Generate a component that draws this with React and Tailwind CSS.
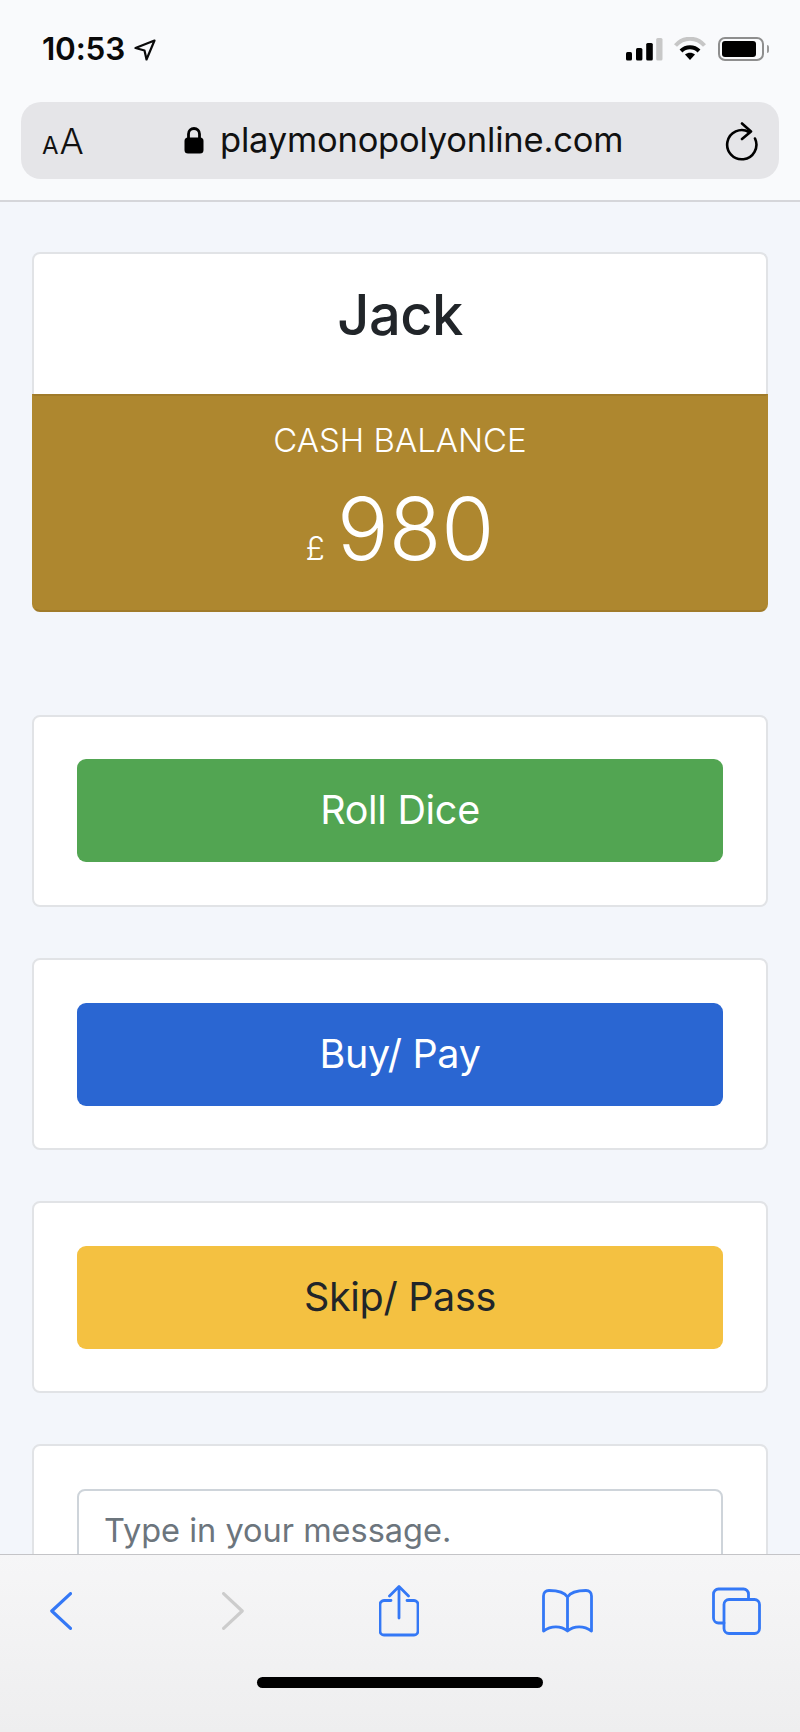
const font = { fontFamily: "Inter, 'Noto Sans', sans-serif" };

function Chevron({ dir, color }) {
  return (
    <svg width="22" height="38" viewBox="0 0 22 38" fill="none" stroke={color} strokeWidth="3.2" strokeLinecap="round" strokeLinejoin="round">
      {dir === "left" ? <path d="M20.5 1.6 L1.8 19 L20.5 36.4" /> : <path d="M1.6 1.6 L20.2 19 L1.6 36.4" />}
    </svg>
  );
}

function CardAction({ color, text, top, children }) {
  return (
    <div className={`h-[192px] rounded-lg border-2 border-[#e1e3e6] bg-white pl-[43px] pr-[43px] ${top}`}>
      <div className={`flex h-[103px] items-center justify-center rounded-[9px] text-[39.5px] leading-none tracking-[-0.3px] ${color} ${text}`}>
        {children}
      </div>
    </div>
  );
}

export default function App() {
  return (
    <div className="flex h-[1732px] w-[800px] flex-col overflow-hidden bg-[#f3f6fb]" style={font}>
      <header className="h-[202px] shrink-0 border-b-2 border-[#d5d6da] bg-[#f9fafc] px-[21px]">
        <div className="flex h-[102px] items-start">
          <div className="ml-[21px] mt-[29px] flex items-center text-[31.5px] font-semibold leading-[40px] tracking-[-0.2px] text-[#0a0a0a]">
            <span>10:53</span>
            <svg className="ml-[9px] mt-[1px]" width="22" height="22" viewBox="0 0 22 22" fill="none" stroke="#0a0a0a" strokeWidth="2.2" strokeLinejoin="round">
              <path d="M20.5 1.5 L1.5 9 L10.5 11.5 L12.5 20.5 Z" />
            </svg>
          </div>
          <div className="ml-auto mr-[10px] mt-[37px] flex items-start">
            <svg width="37" height="24" viewBox="0 0 37 24">
              <rect x="0" y="15" width="6" height="8.5" rx="1.5" fill="#000" />
              <rect x="10" y="11" width="6.4" height="12.5" rx="1.5" fill="#000" />
              <rect x="20.2" y="6" width="6.6" height="17.5" rx="1.5" fill="#000" />
              <rect x="30.2" y="1" width="6.3" height="22.5" rx="1.5" fill="#c8c8c8" />
            </svg>
            <svg className="ml-[11px]" width="32" height="24" viewBox="0 0 32 24" fill="none">
              <path d="M1.5 8.5 C 9.5 -0.5, 22.5 -0.5, 30.5 8.5" stroke="#c6c6c6" strokeWidth="4" />
              <path d="M7 14 C 12 9, 20 9, 25 14" stroke="#000" strokeWidth="4" />
              <path d="M11 17.5 C 14 15, 18 15, 21 17.5 L16 23 Z" fill="#000" />
            </svg>
            <div className="ml-[12px] flex h-[24px] w-[46px] items-center rounded-[7px] border-2 border-[#8e8e8e] p-[2px]">
              <div className="h-[16px] w-[34px] rounded-[3px] bg-black" />
            </div>
            <div className="ml-[3px] mt-[8px] h-[8px] w-[2px] rounded-r-sm bg-[#9a9a9a]" />
          </div>
        </div>
        <div className="flex h-[77px] items-center rounded-[20px] bg-[#e5e5e8] text-[#111]">
          <div className="ml-[21px] flex w-[142px] items-baseline gap-[1px] font-light leading-none">
            <span className="text-[24px] font-normal">A</span>
            <span className="text-[36px]">A</span>
          </div>
          <svg width="20" height="28" viewBox="0 0 20 28" className="mt-[-1px]">
            <path d="M4.5 13 V8 a5.5 5.5 0 0 1 11 0 V13" fill="none" stroke="#000" strokeWidth="2.8" />
            <rect x="0.5" y="11.5" width="19" height="16" rx="3.5" fill="#000" />
          </svg>
          <span className="ml-[16px] text-[34.5px] leading-none tracking-[-0.2px]">playmonopolyonline.com</span>
          <svg className="ml-auto mr-[20px] mt-[2px]" width="34" height="40" viewBox="0 0 34 40" fill="none" stroke="#000" strokeWidth="2.6" strokeLinecap="round" strokeLinejoin="round">
            <path d="M24 10 A14.6 14.6 0 1 0 30 16.5" />
            <path d="M17 1.5 L26 9.5 L17 17" />
          </svg>
        </div>
      </header>

      <main className="min-h-0 flex-1 overflow-hidden px-[32px] pt-[50px]">
        <section className="flex h-[360px] flex-col">
          <div className="flex h-[142px] items-center justify-center rounded-t-lg border-2 border-b-0 border-[#e1e3e6] bg-white pb-[18px] text-[56px] font-medium leading-none tracking-[-0.5px] text-[#212529]">
            Jack
          </div>
          <div className="flex h-[218px] flex-col items-center rounded-b-lg border-2 border-[#a07b2a] border-x-[#ae872f] bg-[#ae872f] text-white">
            <div className="mt-[24px] text-[33px] font-light leading-[40px]">CASH BALANCE</div>
            <div className="mt-[26px] flex items-baseline leading-none">
              <span className="mr-[12px] text-[32px] font-light">£</span>
              <span className="text-[86px] font-[350]">980</span>
            </div>
          </div>
        </section>

        <div className="mt-[103px] flex flex-col gap-[51px]">
          <CardAction color="bg-[#52a552]" text="text-white" top="pt-[42px]">Roll Dice</CardAction>
          <CardAction color="bg-[#2a66d2]" text="text-white" top="pt-[43px]">Buy/ Pay</CardAction>
          <CardAction color="bg-[#f4c141]" text="text-[#212529]" top="pt-[43px]">Skip/ Pass</CardAction>
          <div className="h-[192px] rounded-lg border-2 border-[#e1e3e6] bg-white pl-[43px] pr-[43px] pt-[43px]">
            <input
              readOnly
              placeholder="Type in your message."
              className="h-[90px] w-full rounded-lg border-2 border-[#ced4da] bg-white px-[25px] pb-[8px] text-[32.5px] leading-none text-[#212529] placeholder:text-[#6c757d] outline-none"
            />
          </div>
        </div>
      </main>

      <footer className="h-[178px] shrink-0 border-t border-[#c4c4c7] bg-gradient-to-b from-[#f6f6f7] to-[#eeeeef]">
        <div className="ml-[50px] mt-[30px] flex h-[52px] items-center">
          <Chevron dir="left" color="#3478f6" />
          <div className="ml-[150px]">
            <Chevron dir="right" color="#cccccc" />
          </div>
          <svg className="ml-[135px]" width="40" height="52" viewBox="0 0 40 52" fill="none" stroke="#3478f6" strokeWidth="2.8" strokeLinecap="round" strokeLinejoin="round">
            <path d="M12 15.5 H5 a4 4 0 0 0 -4 4 V46 a4 4 0 0 0 4 4 H35 a4 4 0 0 0 4 -4 V19.5 a4 4 0 0 0 -4 -4 H28" />
            <path d="M20 33 V2 M10.5 11 L20 1.5 L29.5 11" />
          </svg>
          <svg className="ml-[123px]" width="51" height="44" viewBox="0 0 51 44" fill="none" stroke="#3478f6" strokeWidth="2.8" strokeLinecap="round" strokeLinejoin="round">
            <path d="M25.5 8 C 22 2.5, 15 1.5, 7 1.5 C 3.5 1.5, 1.5 3.5, 1.5 7 V42 C 9 36.5, 19 36.5, 25.5 42 C 32 36.5, 42 36.5, 49.5 42 V7 C 49.5 3.5, 47.5 1.5, 44 1.5 C 36 1.5, 29 2.5, 25.5 8 Z M25.5 8 V42" />
          </svg>
          <svg className="ml-[119px]" width="49" height="48" viewBox="0 0 49 48" fill="none" stroke="#3478f6" strokeWidth="2.8" strokeLinecap="round" strokeLinejoin="round">
            <path d="M36.5 12 V7 a5 5 0 0 0 -5 -5 H6.5 a5 5 0 0 0 -5 5 V31 a5 5 0 0 0 5 5 H12" />
            <rect x="12" y="12.5" width="35.5" height="34" rx="5" />
          </svg>
        </div>
        <div className="mx-auto mt-[40px] h-[11px] w-[286px] rounded-full bg-black" />
      </footer>
    </div>
  );
}
